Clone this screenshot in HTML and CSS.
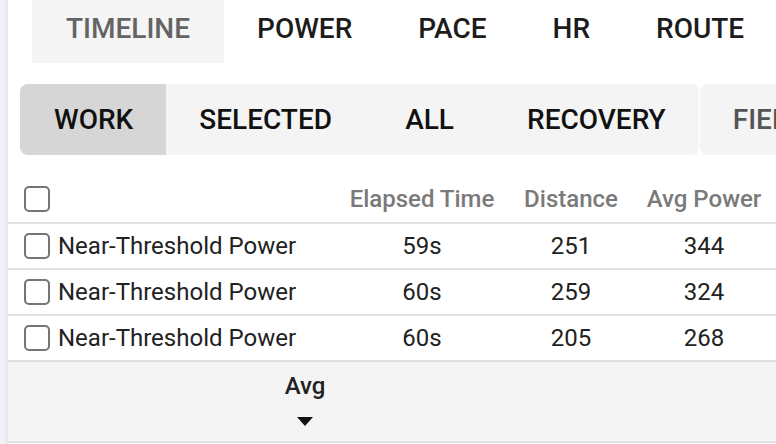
FILE: index.html
```html
<!DOCTYPE html>
<html>
<head>
<meta charset="utf-8">
<link rel="stylesheet" href="styles.css">
</head>
<body>
<div class="page">
  <div class="side"></div>
  <div class="main">
    <div class="tabs">
      <div class="tab active">TIMELINE</div>
      <div class="tab">POWER</div>
      <div class="tab">PACE</div>
      <div class="tab">HR</div>
      <div class="tab">ROUTE</div>
    </div>
    <div class="filters">
      <div class="seg-group">
        <div class="seg selected">WORK</div>
        <div class="seg">SELECTED</div>
        <div class="seg wide">ALL</div>
        <div class="seg">RECOVERY</div>
      </div>
      <div class="seg-group second">
        <div class="seg muted">FIELDS</div>
      </div>
    </div>
    <div class="table">
      <div class="row head">
        <div class="cell name"><span class="check"></span></div>
        <div class="cell c1">Elapsed Time</div>
        <div class="cell c2">Distance</div>
        <div class="cell c3">Avg Power</div>
      </div>
      <div class="row">
        <div class="cell name"><span class="check"></span><span class="label">Near-Threshold Power</span></div>
        <div class="cell c1">59s</div>
        <div class="cell c2">251</div>
        <div class="cell c3">344</div>
      </div>
      <div class="row">
        <div class="cell name"><span class="check"></span><span class="label">Near-Threshold Power</span></div>
        <div class="cell c1">60s</div>
        <div class="cell c2">259</div>
        <div class="cell c3">324</div>
      </div>
      <div class="row">
        <div class="cell name"><span class="check"></span><span class="label">Near-Threshold Power</span></div>
        <div class="cell c1">60s</div>
        <div class="cell c2">205</div>
        <div class="cell c3">268</div>
      </div>
      <div class="foot">
        <div class="agg">
          <span class="agg-label">Avg</span>
          <span class="caret"></span>
        </div>
      </div>
    </div>
  </div>
</div>
</body>
</html>
```
FILE: styles.css
```css
* { box-sizing: border-box; }
html, body { margin: 0; padding: 0; }
body {
  font-family: Roboto, "Noto Sans", sans-serif;
  background: #fff;
  width: 776px;
  height: 444px;
  overflow: hidden;
}
.page {
  display: flex;
  height: 444px;
}
.side {
  flex: 0 0 8px;
  background: linear-gradient(to right, #f3f2f9 0%, #efeef7 60%, #e4e3ec 100%);
}
.main {
  flex: 1;
  min-width: 0;
  overflow: hidden;
}
.tabs {
  display: flex;
  padding-left: 24px;
  height: 63px;
}
.tab {
  display: flex;
  align-items: center;
  padding: 0 33px 6px;
  font-size: 28px;
  font-weight: 500;
  color: #1c1c1c;
  white-space: nowrap;
}
.tab.active {
  background: #f5f5f5;
  color: #646464;
  padding: 0 34px 6px;
}
.filters {
  display: flex;
  margin-top: 21px;
  padding-left: 12px;
  height: 71px;
}
.seg-group {
  display: flex;
  background: #f4f4f4;
  border-radius: 8px;
  overflow: hidden;
  flex-shrink: 0;
}
.seg-group.second {
  margin-left: 1px;
  border-radius: 8px 0 0 8px;
}
.seg {
  display: flex;
  align-items: center;
  justify-content: center;
  padding: 0 33px;
  font-size: 28px;
  font-weight: 500;
  color: #111;
  white-space: nowrap;
}
.seg.wide {
  min-width: 129px;
}
.seg.selected {
  background: #d6d6d6;
  padding: 0 33px 0 34px;
}
.seg.muted {
  color: #555;
}
.table {
  margin-top: 20px;
}
.row {
  display: flex;
  height: 46px;
  border-bottom: 2px solid #e0e0e0;
  align-items: center;
}
.row.head {
  height: 49px;
}
.cell {
  font-size: 24px;
  color: #222;
  text-align: center;
  white-space: nowrap;
}
.head .cell {
  color: #7a7a7a;
  font-weight: 500;
}
.name {
  flex: 0 0 327px;
  display: flex;
  align-items: center;
  padding-left: 16px;
  text-align: left;
}
.c1 { flex: 0 0 174px; }
.c2 { flex: 0 0 124px; }
.c3 { flex: 0 0 142px; }
.check {
  width: 26px;
  height: 26px;
  border: 2px solid #757575;
  border-radius: 5px;
  flex-shrink: 0;
}
.label {
  margin-left: 8px;
  color: #222;
}
.foot {
  background: #f4f4f4;
  height: 81px;
  border-bottom: 2px solid #e2e2e2;
  display: flex;
}
.agg {
  width: 594px;
  display: flex;
  flex-direction: column;
  align-items: center;
  padding-top: 10px;
}
.agg-label {
  font-size: 24px;
  font-weight: 500;
  color: #222;
}
.caret {
  margin-top: 17px;
  width: 0;
  height: 0;
  border-left: 8px solid transparent;
  border-right: 8px solid transparent;
  border-top: 9px solid #111;
}
```
